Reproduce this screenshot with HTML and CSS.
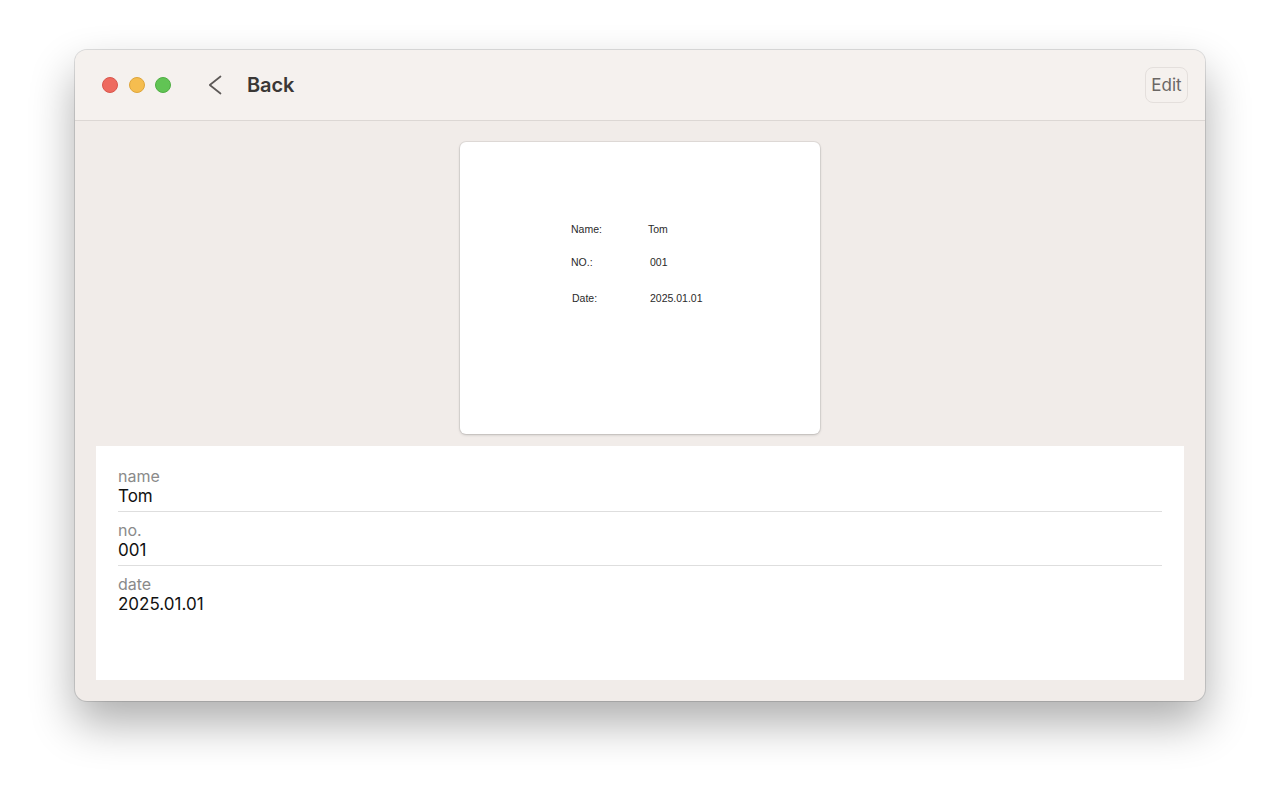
FILE: index.html
```html
<!DOCTYPE html>
<html>
<head>
<meta charset="utf-8">
<link rel="stylesheet" href="styles.css">
</head>
<body>
<div class="window">
  <div class="titlebar">
    <div class="lights">
      <span class="light red"></span>
      <span class="light yellow"></span>
      <span class="light green"></span>
    </div>
    <div class="back">
      <svg class="chev" width="14" height="20" viewBox="0 0 14 20"><path d="M12.5 1.5 L1.8 10 L12.5 18.5" fill="none" stroke="#5d5957" stroke-width="1.7" stroke-linecap="round" stroke-linejoin="round"/></svg>
      <span class="back-text">Back</span>
    </div>
    <div class="spacer"></div>
    <button class="edit">Edit</button>
  </div>
  <div class="content">
    <div class="preview-wrap">
      <div class="card">
        <div class="card-grid">
          <span class="k">Name:</span><span class="v">Tom</span>
          <span class="k">NO.:</span><span class="v v2">001</span>
          <span class="k k3">Date:</span><span class="v v2 v3">2025.01.01</span>
        </div>
      </div>
    </div>
    <div class="panel">
      <div class="row">
        <div class="label">name</div>
        <div class="value">Tom</div>
      </div>
      <div class="row">
        <div class="label">no.</div>
        <div class="value">001</div>
      </div>
      <div class="row last">
        <div class="label">date</div>
        <div class="value">2025.01.01</div>
      </div>
    </div>
  </div>
</div>
</body>
</html>
```
FILE: styles.css
```css
html, body { margin: 0; padding: 0; background: #ffffff; }
body {
  width: 1280px; height: 800px; overflow: hidden;
  font-family: Inter, "Noto Sans", "Liberation Sans", sans-serif;
  padding-top: 50px; padding-left: 75px; box-sizing: border-box;
}
.window {
  width: 1130px; height: 651px;
  border-radius: 12px;
  background: #f1ece9;
  box-shadow: 0 0 0 1px rgba(0,0,0,0.12), 0 22px 45px rgba(0,0,0,0.32);
  overflow: hidden;
  display: flex; flex-direction: column;
}
.titlebar {
  height: 70px; flex: none;
  background: #f5f1ee;
  border-bottom: 1px solid #dcd7d4;
  display: flex; align-items: center;
  padding: 0 17px 0 27px;
}
.lights { display: flex; gap: 10.5px; }
.light { width: 16px; height: 16px; border-radius: 50%; box-sizing: border-box; }
.red { background: #ee6a5f; border: 0.5px solid #d9564c; }
.yellow { background: #f5bd4f; border: 0.5px solid #dea53a; }
.green { background: #61c454; border: 0.5px solid #4fae43; }
.back { display: flex; align-items: center; margin-left: 37px; }
.chev { display: block; }
.back-text { margin-left: 25px; font-size: 20px; font-weight: 600; color: #3a3735; letter-spacing: -0.1px; }
.spacer { flex: 1; }
.edit {
  width: 43px; height: 36px;
  border: 1px solid #e4dfdc; border-radius: 8px;
  background: #f5f1ee; color: #6b6765;
  font-family: Inter, "Noto Sans", sans-serif; font-size: 17px;
  padding: 0; margin-top: 0;
}
.content { flex: 1; display: flex; flex-direction: column; padding: 0 21px 21px; }
.preview-wrap { display: flex; justify-content: center; padding-top: 21px; }
.card {
  width: 360px; height: 292px;
  background: #ffffff; border-radius: 6px;
  box-shadow: 0 0 0 1px rgba(0,0,0,0.06), 0 1px 3px rgba(0,0,0,0.18);
  box-sizing: border-box; padding: 79px 0 0 111px;
}
.card-grid {
  display: grid; grid-template-columns: 77px auto;
  font-family: "Liberation Sans", Arial, sans-serif; font-size: 10.5px; color: #2a2a2a;
  row-gap: 0;
}
.card-grid .k, .card-grid .v { height: 16px; line-height: 16px; }
.card-grid span:nth-child(3), .card-grid span:nth-child(4) { margin-top: 17px; }
.card-grid span:nth-child(5), .card-grid span:nth-child(6) { margin-top: 20px; }
.v2 { padding-left: 2px; }
.k3 { padding-left: 1px; }
.panel {
  margin-top: 12px; flex: 1;
  background: #ffffff;
  padding: 12px 22px 0;
}
.row { padding: 8px 0 4px; border-bottom: 1px solid #dedede; }
.row.last { border-bottom: none; }
.label { font-size: 16px; line-height: 20px; color: #8a8a8a; }
.value { font-size: 17px; line-height: 21px; color: #111; }
```
